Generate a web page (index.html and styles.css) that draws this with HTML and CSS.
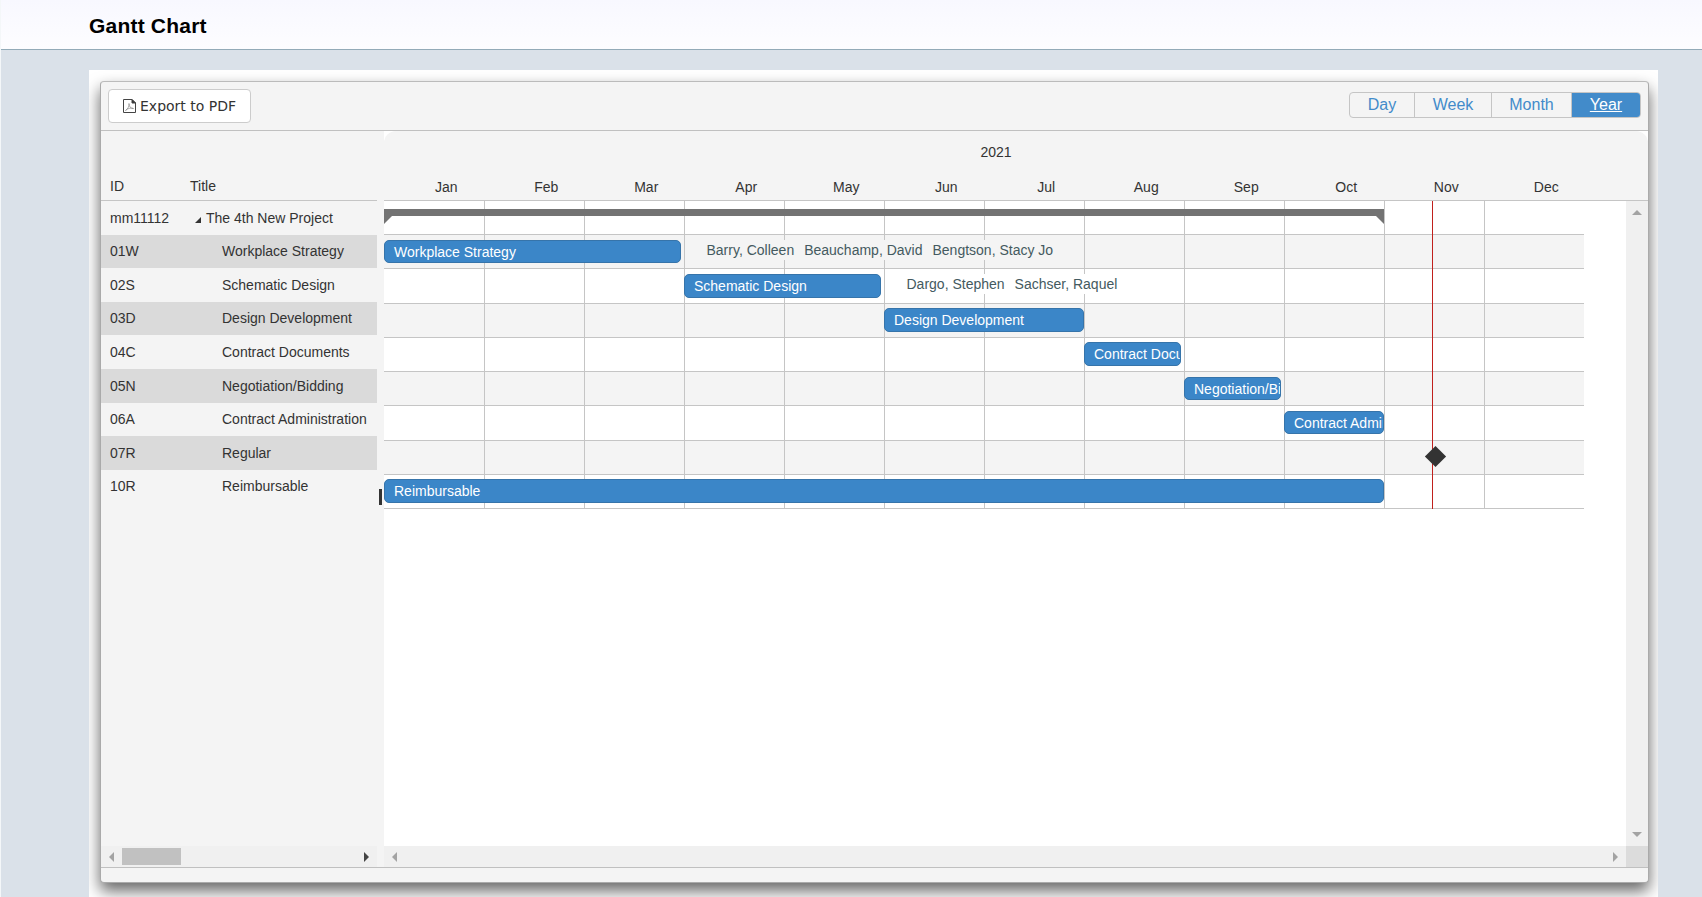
FILE: index.html
```html
<!DOCTYPE html>
<html lang="en">
<head>
    <meta charset="UTF-8">
    <meta name="viewport" content="width=device-width, initial-scale=1.0">
    <title>Gantt Chart</title>
    <link rel="stylesheet" href="styles.css">
</head>
<body>
    <header class="topbar"><h1>Gantt Chart</h1></header>

    <main class="page">
        <div class="gantt">
            <div class="toolbar">
                <button class="export">
                    <svg width="13" height="14" viewBox="0 0 13 14" fill="none" stroke="#444">
                        <path d="M.5.5H9L12.500 4V13.500H.5Z"/>
                        <path d="M9 .5V4H12.500Z" fill="#333"/>
                        <path d="M2.500 11.500C4.500 10.500 6.500 7 6 4.500C6 7.500 7.500 9.500 10.500 9.500C7.500 8.500 4.500 9.500 2.500 11.500Z" stroke="#777" stroke-width=".6"/>
                    </svg>
                    <span>Export to PDF</span>
                </button>
                <nav class="views">
                    <a class="day">Day</a>
                    <a class="week">Week</a>
                    <a class="month">Month</a>
                    <a class="year selected">Year</a>
                </nav>
            </div>

            <div class="content">
                <section class="treelist">
                    <div class="tree-header"><span class="id">ID</span><span>Title</span></div>
                    <div class="tree-rows">
                        <div class="tree-row"><span class="id">mm11112</span><span class="title parent"><svg width="6" height="6" viewBox="0 0 6 6"><path d="M6 0V6H0Z" fill="#333"/></svg>The 4th New Project</span></div>
                        <div class="tree-row"><span class="id">01W</span><span class="title">Workplace Strategy</span></div>
                        <div class="tree-row"><span class="id">02S</span><span class="title">Schematic Design</span></div>
                        <div class="tree-row"><span class="id">03D</span><span class="title">Design Development</span></div>
                        <div class="tree-row"><span class="id">04C</span><span class="title">Contract Documents</span></div>
                        <div class="tree-row"><span class="id">05N</span><span class="title">Negotiation/Bidding</span></div>
                        <div class="tree-row"><span class="id">06A</span><span class="title">Contract Administration</span></div>
                        <div class="tree-row"><span class="id">07R</span><span class="title">Regular</span></div>
                        <div class="tree-row"><span class="id">10R</span><span class="title">Reimbursable</span></div>
                    </div>
                    <div class="scroll-x">
                        <i class="arrow left"></i>
                        <i class="thumb"></i>
                        <i class="arrow right active"></i>
                    </div>
                </section>

                <div class="splitter"><i class="handle"></i></div>

                <section class="timeline">
                    <div class="time-header">
                        <div class="time-header-inner">
                            <div class="year-label">2021</div>
                            <div class="months">
                                <span>Jan</span><span>Feb</span><span>Mar</span><span>Apr</span><span>May</span><span>Jun</span><span>Jul</span><span>Aug</span><span>Sep</span><span>Oct</span><span>Nov</span><span>Dec</span>
                            </div>
                        </div>
                    </div>
                    <div class="time-body">
                        <div class="chart">
                            <div class="rows">
                                <div class="row"><div class="summary" style="width: 1000px"></div></div>
                                <div class="row"><div class="task" style="width: 297px">Workplace Strategy</div><div class="resources"><span>Barry, Colleen</span><span>Beauchamp, David</span><span>Bengtson, Stacy Jo</span></div></div>
                                <div class="row"><div class="task" style="margin-left: 300px; width: 197px">Schematic Design</div><div class="resources"><span>Dargo, Stephen</span><span>Sachser, Raquel</span></div></div>
                                <div class="row"><div class="task" style="margin-left: 500px; width: 200px">Design Development</div></div>
                                <div class="row"><div class="task" style="margin-left: 700px; width: 97px">Contract Documents</div></div>
                                <div class="row"><div class="task" style="margin-left: 800px; width: 97px">Negotiation/Bidding</div></div>
                                <div class="row"><div class="task" style="margin-left: 900px; width: 100px">Contract Administration</div></div>
                                <div class="row"></div>
                                <div class="row"><div class="task" style="width: 1000px">Reimbursable</div></div>
                            </div>
                            <div class="current-time"></div>
                            <div class="milestone"></div>
                        </div>
                        <div class="scroll-y">
                            <i class="arrow up"></i>
                            <i class="arrow down"></i>
                        </div>
                    </div>
                    <div class="time-scroll">
                        <div class="scroll-x">
                            <i class="arrow left"></i>
                            <i class="arrow right"></i>
                        </div>
                        <div class="corner"></div>
                    </div>
                </section>
            </div>
            <div class="footer"></div>
        </div>
    </main>
</body>
</html>
```
FILE: styles.css
```css
* {
    box-sizing: border-box;
}
body {
    margin: 0;
    height: 897px;
    overflow: hidden;
    display: flex;
    flex-direction: column;
    background: #dae1e9;
    border-left: 1px solid #f4f7f9;
    font: 14px/20px "Liberation Sans", Arial, sans-serif;
    color: #333;
}
.topbar {
    height: 50px;
    flex: none;
    padding: 14px 88px;
    background: linear-gradient(#f8f8ff, #fdfdff);
    border-bottom: 1px solid #93abb8;
}
.topbar h1 {
    margin: 0;
    font-size: 21px;
    line-height: 24px;
    letter-spacing: 0.2px;
    color: #000;
}
.page {
    flex: 1;
    margin: 20px 44px 0 88px;
    padding: 11px 9px 0 11px;
    background: #fff;
    overflow: hidden;
}
.gantt {
    height: 802px;
    display: flex;
    flex-direction: column;
    background: #f4f4f4;
    border: 1px solid #aaa;
    border-top-color: #bbb;
    border-radius: 4px;
    box-shadow: 0 8px 16px rgba(0, 0, 0, 0.6);
}

/* Toolbar */
.toolbar {
    height: 49px;
    flex: none;
    display: flex;
    justify-content: space-between;
    align-items: flex-start;
    padding: 7px 7px 0 7px;
    border-bottom: 1px solid #c0c0c0;
}
.export {
    display: flex;
    align-items: center;
    gap: 4px;
    width: 143px;
    height: 34px;
    padding: 0 0 0 14px;
    background: #fff;
    border: 1px solid #ccc;
    border-radius: 4px;
    font: 14px "DejaVu Sans", sans-serif;
    color: #333;
    white-space: nowrap;
}
.views {
    display: flex;
    height: 26px;
    margin-top: 3px;
    border: 1px solid #c5c5c5;
    border-radius: 4px;
    overflow: hidden;
    font-size: 16px;
    line-height: 24px;
    text-align: center;
    color: #428bca;
}
.views a {
    border-right: 1px solid #c5c5c5;
}
.day {
    width: 65px;
}
.week {
    width: 77px;
}
.month {
    width: 80px;
}
.year {
    width: 68px;
}
.views .selected {
    background: #428bca;
    color: #fff;
    text-decoration: underline;
    border-right: 0;
}

/* Task list */
.content {
    flex: 1;
    display: flex;
    min-height: 0;
}
.treelist {
    width: 276px;
    display: flex;
    flex-direction: column;
}
.tree-header {
    height: 70px;
    display: flex;
    align-items: flex-end;
    padding: 0 0 4px 9px;
    border-bottom: 1px solid #c5c5c5;
}
.id {
    width: 80px;
}
.tree-rows {
    flex: 1;
}
.tree-row {
    height: 33.6px;
    display: flex;
    padding: 6.600px 0 0 9px;
}
.tree-row:nth-child(even) {
    background: #dadada;
}
.title {
    padding-left: 32px;
}
.title.parent {
    padding-left: 5px;
}
.parent svg {
    margin-right: 5px;
}
.scroll-x {
    height: 21px;
    display: flex;
    align-items: center;
    padding: 0 8px;
    background: #f0f0f0;
}
.thumb {
    width: 59px;
    height: 17px;
    margin-left: 8px;
    background: #c1c1c1;
}
.arrow {
    border: 5px solid transparent;
}
.arrow.left {
    border-right-color: #a3a3a3;
    border-left: 0;
}
.arrow.right {
    margin-left: auto;
    border-left-color: #a3a3a3;
    border-right: 0;
}
.arrow.right.active {
    border-left-color: #444;
}
.splitter {
    width: 7px;
    display: flex;
    padding: 358px 0 0 2px;
}
.handle {
    width: 3px;
    height: 16px;
    background: #333;
}

/* Timeline */
.timeline {
    flex: 1;
    display: flex;
    flex-direction: column;
    background: #fff;
}
.time-header {
    height: 70px;
    border-bottom: 1px solid #c5c5c5;
}
.time-header-inner {
    height: 69px;
    background: #f4f4f4;
    border-radius: 12px 12px 0 0;
}
.year-label {
    width: 1200px;
    height: 34px;
    padding: 11px 0 0 24px;
    text-align: center;
}
.months {
    display: flex;
    padding-top: 12px;
}
.months span {
    width: 100px;
    padding-left: 24.500px;
    text-align: center;
}
.time-body {
    flex: 1;
    display: flex;
    justify-content: space-between;
}
.chart {
    position: relative;
    width: 1200px;
    height: 308px;
}
.rows {
    height: 308px;
    display: grid;
    grid-template-rows: repeat(9, 1fr);
}
.row {
    display: flex;
    align-items: flex-start;
    border-bottom: 1px solid #c5c5c5;
    background: repeating-linear-gradient(to right, #c5c5c5 0 1px, transparent 1px 100px) 100px 0 no-repeat;
}
.row:nth-child(even) {
    background-color: #f4f4f4;
}
.summary {
    height: 15px;
    margin-top: 8px;
    background: #737373;
    clip-path: polygon(0 0, 100% 0, 100% 100%, calc(100% - 8px) 7px, 8px 7px, 0 100%);
}
.task {
    flex: none;
    height: 23.500px;
    margin-top: 4.600px;
    padding: 0 0 0 9px;
    overflow: hidden;
    white-space: nowrap;
    line-height: 22px;
    color: #fff;
    background: #3b86c8;
    border: 1px solid #3674aa;
    border-radius: 5px;
}
.resources {
    display: flex;
    margin: 5px 0 0 20.500px;
    color: #445a60;
}
.resources span {
    padding: 0 5px;
    background: #fff;
}
.row:nth-child(even) .resources span {
    background: #f4f4f4;
}
.current-time {
    position: absolute;
    left: 1048px;
    top: 0;
    width: 1px;
    height: 308px;
    background: #c0201c;
}
.milestone {
    position: absolute;
    left: 1044px;
    top: 248px;
    width: 15px;
    height: 15px;
    background: #333;
    transform: rotate(45deg);
}
.scroll-y {
    width: 22px;
    display: flex;
    flex-direction: column;
    align-items: center;
    justify-content: space-between;
    padding: 9px 0;
    background: #f0f0f0;
}
.arrow.up {
    border-bottom-color: #a3a3a3;
    border-top: 0;
}
.arrow.down {
    border-top-color: #a3a3a3;
    border-bottom: 0;
}
.time-scroll {
    display: flex;
}
.time-scroll .scroll-x {
    flex: 1;
}
.corner {
    width: 22px;
    background: #dcdcdc;
}
.footer {
    height: 15px;
    flex: none;
    border-top: 1px solid #c0c0c0;
}
```
